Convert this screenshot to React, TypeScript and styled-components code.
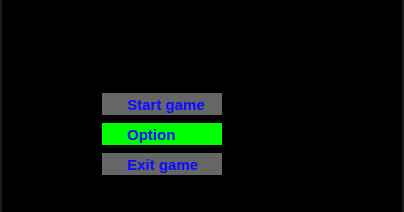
import React, { useState } from "react";
import styled, { createGlobalStyle } from "styled-components";

const GlobalStyle = createGlobalStyle`
  html, body {
    margin: 0;
    padding: 0;
    background: #000000;
  }
`;

const Screen = styled.div`
  box-sizing: border-box;
  width: 404px;
  height: 212px;
  background: #000000;
  border-left: 2px solid #1c1c1c;
  border-right: 2px solid #1c1c1c;
  padding: 93px 0 0 100px;
`;

const Menu = styled.div`
  display: flex;
  flex-direction: column;
  gap: 8px;
  width: 120px;
`;

const MenuItem = styled.div<{ $active?: boolean }>`
  box-sizing: border-box;
  height: 22px;
  padding-left: 25px;
  display: flex;
  align-items: center;
  background: ${(p) => (p.$active ? "#00ff00" : "#666666")};
  color: #0c0cff;
  font-family: "Liberation Sans", Arial, sans-serif;
  font-weight: bold;
  font-size: 15px;
  cursor: pointer;
`;

const items = ["Start game", "Option", "Exit game"];

export default function App() {
  const [active, setActive] = useState(1);
  return (
    <>
      <GlobalStyle />
      <Screen>
        <Menu>
          {items.map((label, i) => (
            <MenuItem key={label} $active={i === active} onMouseEnter={() => setActive(i)}>
              {label}
            </MenuItem>
          ))}
        </Menu>
      </Screen>
    </>
  );
}
